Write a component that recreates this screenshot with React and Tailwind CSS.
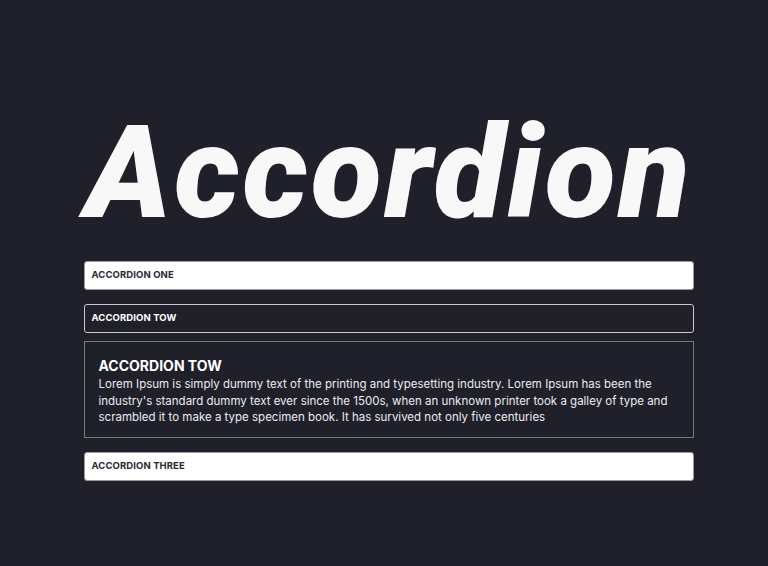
import React, { useState } from "react";

const items = [
  {
    id: 1,
    title: "ACCORDION ONE",
    body: "Lorem Ipsum is simply dummy text of the printing and typesetting industry.",
  },
  {
    id: 2,
    title: "ACCORDION TOW",
    body: "Lorem Ipsum is simply dummy text of the printing and typesetting industry. Lorem Ipsum has been the industry's standard dummy text ever since the 1500s, when an unknown printer took a galley of type and scrambled it to make a type specimen book. It has survived not only five centuries",
  },
  {
    id: 3,
    title: "ACCORDION THREE",
    body: "Lorem Ipsum is simply dummy text of the printing and typesetting industry.",
  },
];

const AccordionItem = ({ item, isOpen, onToggle }) => {
  return (
    <div>
      <button
        onClick={onToggle}
        className={`w-full h-[29px] flex items-center px-[7px] rounded-[3px] text-left text-[9.5px] font-bold tracking-[0.1px] ${
          isOpen
            ? "bg-[#20202b] text-white border border-[#c9c9cc]"
            : "bg-white text-[#2a2a33] border border-[#9a9aa0]"
        }`}
      >
        {item.title}
      </button>
      {isOpen && (
        <div className="mt-[8px] border border-[#78787f] px-[14px] pt-[14px] pb-[11px] text-white">
          <h3 className="text-[14px] font-bold leading-[20px]">{item.title}</h3>
          <p className="text-[11.5px] leading-[16.5px] text-[#ececef]">
            {item.body}
          </p>
        </div>
      )}
    </div>
  );
};

const App = () => {
  const [open, setOpen] = useState(2);

  return (
    <div
      className="min-h-[566px] bg-[#20202b] flex flex-col items-center"
      style={{ fontFamily: "Inter, 'Noto Sans', sans-serif" }}
    >
      <h1
        className="mt-[98px] ml-[10px] text-[130px] leading-[150px] font-black italic text-[#f8f8f8] tracking-[2.75px]"
        style={{ fontFamily: "Roboto, sans-serif" }}
      >
        Accordion
      </h1>
      <div className="w-[610px] ml-[9px] mt-[13px] flex flex-col gap-[14px]">
        {items.map((item) => (
          <AccordionItem
            key={item.id}
            item={item}
            isOpen={open === item.id}
            onToggle={() => setOpen(open === item.id ? null : item.id)}
          />
        ))}
      </div>
    </div>
  );
};

export default App;
